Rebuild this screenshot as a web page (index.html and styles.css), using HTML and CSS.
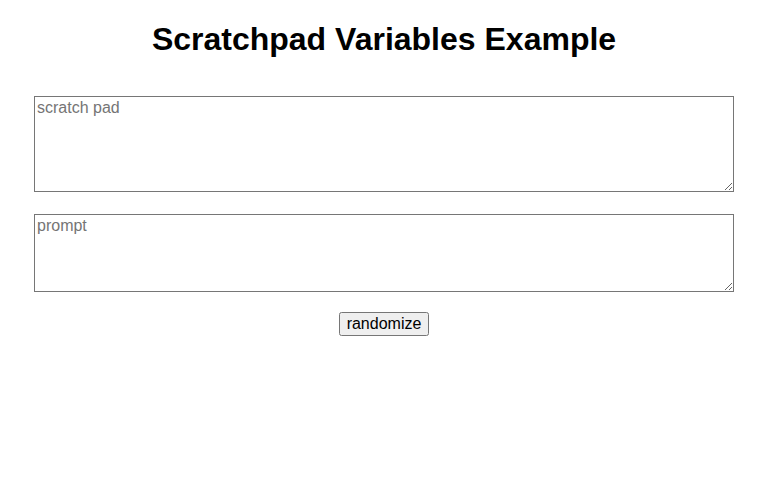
FILE: index.html
```html
<!DOCTYPE html>
<html lang="en">
<head>
    <meta charset="UTF-8">
    <meta name="viewport" content="width=device-width, initial-scale=1.0">
    <title>Scratchpad Variables Example</title>
    <link rel="stylesheet" href="styles.css">
</head>
<body>
    <h1 class="title">Scratchpad Variables Example</h1>
    <div class="panel">
        <textarea class="pad" placeholder="scratch pad"></textarea>
        <textarea class="prompt" placeholder="prompt"></textarea>
        <button class="btn">randomize</button>
    </div>
</body>
</html>
```

FILE: styles.css
```css
body {
    margin: 0;
    font-family: "Liberation Sans", Arial, sans-serif;
    color: #000;
    background: #fff;
}
.title {
    margin: 0;
    padding-top: 21px;
    font-size: 32px;
    line-height: 37px;
    text-align: center;
}
.panel {
    display: flex;
    flex-direction: column;
    align-items: center;
    gap: 22px;
    padding-top: 38px;
}
textarea {
    box-sizing: border-box;
    width: 700px;
    padding: 2px;
    border: 1px solid #767676;
    font: 16px "Liberation Sans", Arial, sans-serif;
}
textarea::placeholder {
    color: #757575;
}
.pad {
    height: 96px;
}
.prompt {
    height: 78px;
}
.btn {
    margin-top: -2px;
    font: 16px "Liberation Sans", Arial, sans-serif;
    padding: 1px 6px;
}
```
